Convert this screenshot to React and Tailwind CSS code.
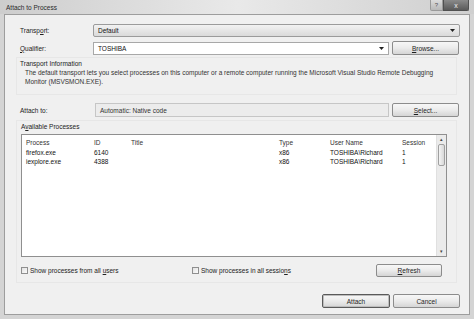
import React from 'react';

const Btn = ({ children, className = '', primary = false }) => (
  <div
    className={`flex items-center justify-center rounded-[2px] border bg-gradient-to-b from-[#f7f7f7] via-[#ebebeb] to-[#d5d5d5] text-[6.5px] text-[#1e1e1e] ${
      primary ? 'border-[#5a5a5a] shadow-[inset_0_0_0_1px_#bdbdbd]' : 'border-[#8c8c8c]'
    } ${className}`}
  >
    {children}
  </div>
);

const Arrow = () => (
  <svg width="5" height="3" viewBox="0 0 5 3" className="shrink-0">
    <path d="M0 0h5L2.5 3z" fill="#222" />
  </svg>
);

const Check = ({ label }) => (
  <div className="flex items-center gap-[2px]">
    <div className="w-[7px] h-[7px] border border-[#8f8f8f] bg-gradient-to-br from-[#e2e2e2] to-[#fbfbfb]" />
    <span>{label}</span>
  </div>
);

const rows = [
  ['firefox.exe', '6140', '', 'x86', 'TOSHIBA\\Richard', '1'],
  ['iexplore.exe', '4388', '', 'x86', 'TOSHIBA\\Richard', '1'],
];

export default function App() {
  return (
    <div className="w-[474px] h-[319px] flex flex-col bg-[#d4d4d4] font-['Liberation_Sans',sans-serif] text-[6.5px] leading-[9px] text-[#222] overflow-hidden">
      {/* title bar */}
      <div className="h-[14px] flex items-start bg-gradient-to-r from-[#cdcdcd] via-[#e9e9e9] to-[#cfcfcf] pl-[6px]">
        <span className="mt-[3px] text-[6.5px] text-[#2a2a2a]">Attach to Process</span>
        <div className="ml-auto mr-[5px] flex">
          <div className="w-[13px] h-[11px] flex items-center justify-center border border-[#9a9a9a] border-t-0 rounded-bl-[2px] bg-gradient-to-b from-[#dcdcdc] to-[#b8b8b8] text-[6px] text-[#555]">?</div>
          <div className="w-[26px] h-[11px] flex items-center justify-center border border-[#505050] border-t-0 rounded-br-[2px] bg-gradient-to-b from-[#8a8a8a] to-[#5a5a5a] text-[7px] text-[#f0f0f0]">x</div>
        </div>
      </div>

      {/* client area */}
      <div className="mx-[4px] mb-[4px] flex-1 flex flex-col border border-[#9d9d9d] bg-[#f0f0f0] pl-[11px] pr-[9px]">
        <div className="mt-[9px] flex items-center h-[13px]">
          <span className="w-[77px] pl-[4px]">Transp<u>o</u>rt:</span>
          <div className="flex-1 h-[13px] flex items-center justify-between border border-[#9b9b9b] rounded-[2px] bg-gradient-to-b from-[#f2f2f2] to-[#dadada] px-[4px]">
            <span className="text-[#111]">Default</span>
            <Arrow />
          </div>
        </div>

        <div className="mt-[4px] flex items-center h-[14px]">
          <span className="w-[77px] pl-[4px]"><u>Q</u>ualifier:</span>
          <div className="w-[296px] h-[13px] flex items-center justify-between border border-[#a8a8a8] bg-white px-[4px]">
            <span className="text-[#111]">TOSHIBA</span>
            <Arrow />
          </div>
          <Btn className="ml-[3px] w-[67px] h-[14px]"><span><u>B</u>rowse...</span></Btn>
        </div>

        <div className="mt-[2px] mr-[3px] h-[38px] border border-[#e7e7e7] pt-[1px] pl-[3px]">
          <div>Transport Information</div>
          <div className="pl-[5px] text-[#333]">
            The default transport lets you select processes on this computer or a remote computer running the Microsoft Visual Studio Remote Debugging
            <br />
            Monitor (MSVSMON.EXE).
          </div>
        </div>

        <div className="mt-[8px] flex items-center h-[14px]">
          <span className="w-[79px] pl-[4px]">Attach to:</span>
          <div className="w-[294px] h-[14px] flex items-center border border-[#c6c6c6] bg-[#ececec] px-[4px] text-[#333]">
            Automatic: Native code
          </div>
          <Btn className="ml-[3px] w-[67px] h-[14px]"><span><u>S</u>elect...</span></Btn>
        </div>

        <div className="mt-[3px] mr-[3px] h-[163px] border border-[#e7e7e7] pl-[4px] flex flex-col">
          <div className="mt-[1px] h-[9px]">A<u>v</u>ailable Processes</div>
          <div className="mt-[3px] w-[426px] h-[123px] flex border border-[#8f8f8f] bg-white">
            <div className="flex-1 pt-[2px]">
              <div className="grid grid-cols-[68px_37px_148px_51px_72px_1fr] pl-[4px] h-[11px] items-center text-[#333]">
                <span>Process</span>
                <span>ID</span>
                <span>Title</span>
                <span>Type</span>
                <span>User Name</span>
                <span>Session</span>
              </div>
              {rows.map((r, i) => (
                <div key={i} className="grid grid-cols-[68px_37px_148px_51px_72px_1fr] pl-[4px] h-[9px] items-center text-[#111]">
                  {r.map((c, j) => (
                    <span key={j}>{c}</span>
                  ))}
                </div>
              ))}
            </div>
            <div className="w-[10px] flex flex-col bg-[#ebebeb] border-l border-[#e0e0e0]">
              <div className="h-[9px] flex items-center justify-center text-[5px] text-[#444]">▴</div>
              <div className="mx-[1px] h-[22px] rounded-[2px] border border-[#a0a0a0] bg-gradient-to-r from-[#f4f4f4] to-[#d8d8d8]" />
              <div className="flex-1" />
              <div className="h-[9px] flex items-center justify-center text-[5px] text-[#444]">▾</div>
            </div>
          </div>
          <div className="mt-[7px] flex items-center h-[13px]">
            <div className="w-[171px]">
              <Check label={<span>Show processes from all <u>u</u>sers</span>} />
            </div>
            <Check label={<span>Show processes in all sessio<u>n</u>s</span>} />
            <Btn className="ml-auto mr-[14px] w-[66px] h-[13px]"><span><u>R</u>efresh</span></Btn>
          </div>
        </div>

        <div className="mt-[11px] flex justify-end gap-[3px]">
          <Btn primary className="w-[68px] h-[14px]">Attach</Btn>
          <Btn className="w-[67px] h-[14px]">Cancel</Btn>
        </div>
      </div>
    </div>
  );
}
